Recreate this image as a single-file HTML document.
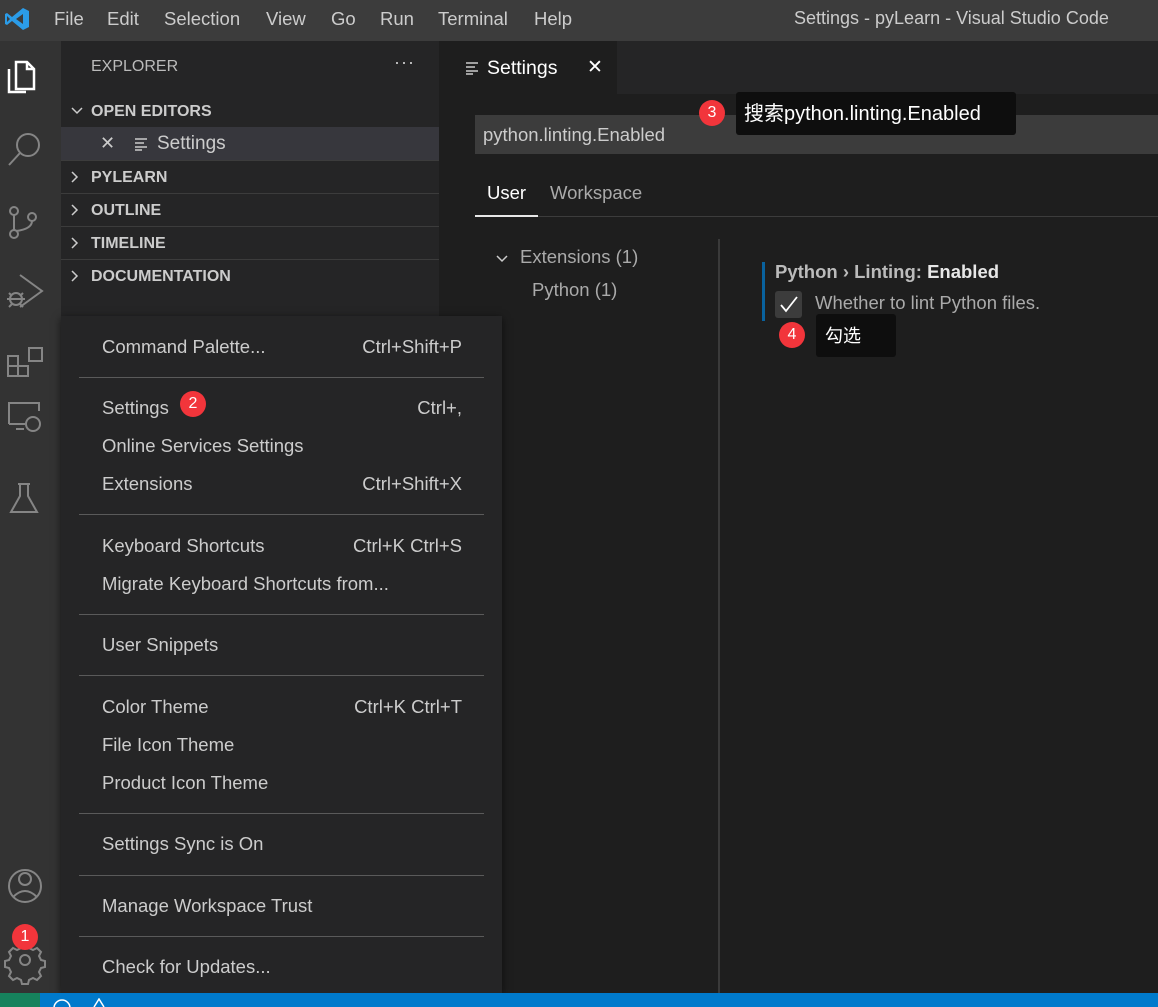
<!DOCTYPE html>
<html><head><meta charset="utf-8"><style>
*{margin:0;padding:0;box-sizing:border-box}
body{width:1158px;height:1007px;overflow:hidden;background:#1e1e1e;font-family:"Segoe UI","Liberation Sans","Noto Sans CJK SC",sans-serif;color:#ccc;position:relative}
.a{position:absolute;white-space:nowrap}
.mi{position:absolute;left:102px;font-size:18.5px;color:#ccc;line-height:24px;margin-top:2px}
.sc{position:absolute;right:696px;font-size:18.5px;color:#ccc;line-height:24px;margin-top:2px}
.sep{position:absolute;left:79px;width:405px;height:1px;background:#5a5a5a}
.sh{position:absolute;left:61px;width:378px;height:33px;border-top:1px solid #3c3c3c;font-weight:bold;font-size:16px;color:#ccc;line-height:34px;padding-left:30px}
.badge{position:absolute;width:26px;height:26px;border-radius:13px;background:#f2353b;color:#fff;font-size:16px;text-align:center;line-height:26px}
.tip{position:absolute;background:#0e0e0e;color:#fff;border-radius:3px}
</style></head><body>
<div class="a" style="left:0;top:0;width:1158px;height:41px;background:#3c3c3c"></div>
<svg class="a" style="left:4px;top:6px" width="26" height="26" viewBox="0 0 26 26"><path d="M19 2 L25 5 V21 L19 24 L8 15 L3 19 L1 18 V8 L3 7 L8 11 Z M19 8 L12 13 L19 18 Z M3 10 V16 L6 13 Z" fill="#2b9ce8"/></svg>
<div class="a" style="left:54px;top:8px;font-size:18.5px;color:#ccc">File</div>
<div class="a" style="left:107px;top:8px;font-size:18.5px;color:#ccc">Edit</div>
<div class="a" style="left:164px;top:8px;font-size:18.5px;color:#ccc">Selection</div>
<div class="a" style="left:266px;top:8px;font-size:18.5px;color:#ccc">View</div>
<div class="a" style="left:331px;top:8px;font-size:18.5px;color:#ccc">Go</div>
<div class="a" style="left:380px;top:8px;font-size:18.5px;color:#ccc">Run</div>
<div class="a" style="left:438px;top:8px;font-size:18.5px;color:#ccc">Terminal</div>
<div class="a" style="left:534px;top:8px;font-size:18.5px;color:#ccc">Help</div>
<div class="a" style="left:794px;top:8px;font-size:18px;color:#ccc">Settings - pyLearn - Visual Studio Code</div>
<div class="a" style="left:0;top:41px;width:61px;height:952px;background:#333"></div>
<svg class="a" style="left:0;top:41px" width="61" height="952" fill="none" stroke="#858585" stroke-width="2">
<path d="M16 21 h11 l7 7 v20 h-18 z M27 21 v7 h7 M9 28 v23 h17" stroke="#fff" stroke-width="2.5"/>
<circle cx="28" cy="104" r="11"/><path d="M20 112 l-11 12"/>
<circle cx="14" cy="170" r="4"/><circle cx="14" cy="193" r="4"/><circle cx="32" cy="176" r="4"/><path d="M14 174 v15 M32 180 q0 8 -16 10"/>
<path d="M20 234 l22 16 l-22 16"/><circle cx="16" cy="258" r="6"/><path d="M7 258h18 M9 252l3 3 M23 252l-3 3 M9 266l3-3 M23 266l-3-3"/>
<path d="M8 315 h10 v10 h-10 z M18 325 h10 v10 h-10 z M8 325 h10 v10 h-10 z M29 307 h13 v13 h-13 z"/>
<path d="M9 383 v-21 h30 v8 M9 383 h16 M16 388 h8"/><circle cx="33" cy="383" r="7"/>
<path d="M18 443 h12 M20 443 v12 l-9 16 h26 l-9 -16 v-12"/>
<circle cx="25" cy="845" r="16"/><circle cx="25" cy="838" r="6"/><path d="M13 856 q12 -12 24 0"/>
<path d="M22 903 h6 l1 4 l4 2 l4 -2 l4 4 l-2 4 l2 4 l4 1 v6 l-4 1 l-2 4 l2 4 l-4 4 l-4 -2 l-4 2 l-1 4 h-6 l-1 -4 l-4 -2 l-4 2 l-4 -4 l2 -4 l-2 -4 l-4 -1 v-6 l4 -1 l2 -4 l-2 -4 l4 -4 l4 2 l4 -2 z"/><circle cx="25" cy="919" r="5"/>
</svg>
<div class="badge" style="left:12px;top:924px">1</div>
<div class="a" style="left:61px;top:41px;width:378px;height:275px;background:#252526"></div>
<div class="a" style="left:91px;top:58px;font-size:16px;color:#bbb">EXPLORER</div>
<div class="a" style="left:394px;top:52px;font-size:18px;color:#ccc;letter-spacing:1px">···</div>
<div class="a" style="left:61px;top:96px;width:378px;height:32px;font-weight:bold;font-size:16px;line-height:32px;padding-left:30px;color:#ccc">OPEN EDITORS</div>
<svg class="a" style="left:70px;top:104px" width="14" height="14"><path d="M2 4 l5 5 l5 -5" stroke="#ccc" fill="none" stroke-width="1.5"/></svg>
<div class="a" style="left:61px;top:127px;width:378px;height:33px;background:#37373d"></div>
<div class="a" style="left:100px;top:133px;font-size:18px;color:#ccc">✕</div>
<svg class="a" style="left:134px;top:137px" width="14" height="14"><path d="M1 2h12M1 6h9M1 10h12M1 13h7" stroke="#ccc" stroke-width="1.5"/></svg>
<div class="a" style="left:157px;top:133px;font-size:19px;color:#ccc">Settings</div>
<div class="sh" style="top:160px">PYLEARN</div>
<div class="sh" style="top:193px">OUTLINE</div>
<div class="sh" style="top:226px">TIMELINE</div>
<div class="sh" style="top:259px">DOCUMENTATION</div>
<svg class="a" style="left:68px;top:170px" width="14" height="120" stroke="#ccc" fill="none" stroke-width="1.5"><path d="M4 2l5 5l-5 5 M4 35l5 5l-5 5 M4 68l5 5l-5 5 M4 101l5 5l-5 5"/></svg>
<div class="a" style="left:439px;top:41px;width:719px;height:53px;background:#252526"></div>
<div class="a" style="left:439px;top:41px;width:178px;height:53px;background:#1e1e1e"></div>
<svg class="a" style="left:465px;top:61px" width="14" height="14"><path d="M1 2h12M1 6h9M1 10h12M1 13h7" stroke="#ccc" stroke-width="1.5"/></svg>
<div class="a" style="left:487px;top:57px;font-size:19.5px;color:#fff">Settings</div>
<div class="a" style="left:587px;top:56px;font-size:19px;color:#fff">✕</div>
<div class="a" style="left:475px;top:115px;width:683px;height:39px;background:#3c3c3c"></div>
<div class="a" style="left:483px;top:124px;font-size:18.5px;color:#ccc">python.linting.Enabled</div>
<div class="a" style="left:487px;top:182px;font-size:18.5px;color:#fff">User</div>
<div class="a" style="left:550px;top:182px;font-size:18.5px;color:#aaa">Workspace</div>
<div class="a" style="left:475px;top:216px;width:683px;height:1px;background:#3c3c3c"></div>
<div class="a" style="left:475px;top:215px;width:63px;height:2px;background:#e7e7e7"></div>
<svg class="a" style="left:495px;top:252px" width="14" height="14"><path d="M2 4 l5 5 l5 -5" stroke="#ccc" fill="none" stroke-width="1.5"/></svg>
<div class="a" style="left:520px;top:246px;font-size:18.5px;color:#aaa">Extensions (1)</div>
<div class="a" style="left:532px;top:279px;font-size:18.5px;color:#aaa">Python (1)</div>
<div class="a" style="left:718px;top:239px;width:2px;height:754px;background:#3a3a3a"></div>
<div class="a" style="left:762px;top:262px;width:3px;height:59px;background:#007fd4;opacity:.7"></div>
<div class="a" style="left:775px;top:261px;font-size:18.5px;color:#bbb;font-weight:bold">Python › Linting: <span style="color:#e7e7e7">Enabled</span></div>
<div class="a" style="left:775px;top:291px;width:27px;height:27px;background:#3c3c3c;border-radius:3px"></div>
<svg class="a" style="left:777px;top:293px" width="23" height="23"><path d="M4 12 l5 6 l11 -14" stroke="#fff" fill="none" stroke-width="1.8"/></svg>
<div class="a" style="left:815px;top:292px;font-size:18.5px;color:#aaa">Whether to lint Python files.</div>
<div class="tip" style="left:736px;top:92px;width:280px;height:43px;font-size:20px;line-height:45px;padding-left:8px">搜索python.linting.Enabled</div>
<div class="badge" style="left:699px;top:100px">3</div>
<div class="tip" style="left:816px;top:314px;width:80px;height:43px;font-size:18px;line-height:45px;padding-left:9px">勾选</div>
<div class="badge" style="left:779px;top:322px">4</div>
<div class="a" style="left:61px;top:316px;width:441px;height:677px;background:#252526;box-shadow:0 2px 8px rgba(0,0,0,.6)"></div>
<div class="mi" style="top:333px">Command Palette...</div><div class="sc" style="top:333px">Ctrl+Shift+P</div>
<div class="sep" style="top:377px"></div>
<div class="mi" style="top:394px">Settings</div><div class="sc" style="top:394px">Ctrl+,</div>
<div class="badge" style="left:180px;top:391px">2</div>
<div class="mi" style="top:432px">Online Services Settings</div>
<div class="mi" style="top:470px">Extensions</div><div class="sc" style="top:470px">Ctrl+Shift+X</div>
<div class="sep" style="top:514px"></div>
<div class="mi" style="top:532px">Keyboard Shortcuts</div><div class="sc" style="top:532px">Ctrl+K Ctrl+S</div>
<div class="mi" style="top:570px">Migrate Keyboard Shortcuts from...</div>
<div class="sep" style="top:614px"></div>
<div class="mi" style="top:631px">User Snippets</div>
<div class="sep" style="top:675px"></div>
<div class="mi" style="top:693px">Color Theme</div><div class="sc" style="top:693px">Ctrl+K Ctrl+T</div>
<div class="mi" style="top:731px">File Icon Theme</div>
<div class="mi" style="top:769px">Product Icon Theme</div>
<div class="sep" style="top:813px"></div>
<div class="mi" style="top:830px">Settings Sync is On</div>
<div class="sep" style="top:875px"></div>
<div class="mi" style="top:892px">Manage Workspace Trust</div>
<div class="sep" style="top:936px"></div>
<div class="mi" style="top:953px">Check for Updates...</div>
<div class="a" style="left:0;top:993px;width:1158px;height:14px;background:#007acc"></div>
<div class="a" style="left:0;top:993px;width:40px;height:14px;background:#16825d"></div>
<svg class="a" style="left:52px;top:998px" width="80" height="9"><circle cx="10" cy="10" r="8" stroke="#fff" fill="none" stroke-width="1.5"/><path d="M42 9 l5 -8 l5 8" stroke="#fff" fill="none" stroke-width="1.5"/></svg>
</body></html>
